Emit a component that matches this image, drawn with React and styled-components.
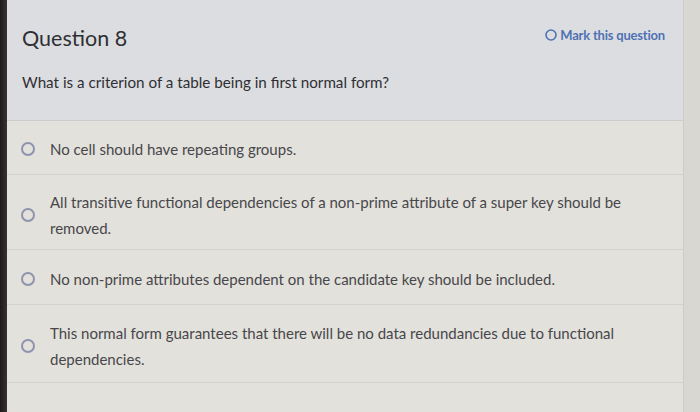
import React from 'react'
import styled, { createGlobalStyle } from 'styled-components'

const GlobalStyle = createGlobalStyle`
  html, body {
    margin: 0;
    padding: 0;
    background: #d7d5cf;
  }
  body {
    font-family: Lato, "Open Sans", sans-serif;
  }
`

const Screen = styled.div`
  display: flex;
  width: 700px;
  height: 412px;
  overflow: hidden;
  background: #d9d7d1;
`

const Bezel = styled.div`
  width: 7px;
  flex-shrink: 0;
  background: linear-gradient(90deg, #1d1a1b, #3a3232);
`

const Panel = styled.div`
  width: 676px;
  display: flex;
  flex-direction: column;
  background: #e3e1db;
  border-right: 1px solid #cfcdc8;
`

const Header = styled.div`
  height: 121px;
  padding: 25px 18px 0 15px;
  box-sizing: border-box;
  background: #dcdde1;
  border-bottom: 1px solid #cdcdcd;
`

const TitleRow = styled.div`
  display: flex;
  justify-content: space-between;
  align-items: flex-start;
`

const Title = styled.h2`
  margin: 0;
  font-size: 21.5px;
  font-weight: 400;
  color: #2f2f33;
`

const MarkLink = styled.a`
  display: flex;
  align-items: center;
  gap: 3px;
  margin-top: 2px;
  font-size: 13px;
  font-weight: 700;
  letter-spacing: -0.2px;
  color: #4f72b3;
  cursor: pointer;
`

const Prompt = styled.p`
  margin: 22px 0 0;
  font-size: 15.2px;
  color: #2f2f33;
`

const Options = styled.div`
  display: flex;
  flex-direction: column;
`

const Option = styled.label`
  display: flex;
  align-items: center;
  gap: 15px;
  height: ${p => p.$h}px;
  padding: ${p => (p.$two ? 5 : 3)}px 0 0 14px;
  box-sizing: border-box;
  border-bottom: 1px solid #d3d1cb;
  cursor: pointer;
`

const Radio = styled.span`
  width: 10px;
  height: 10px;
  flex-shrink: 0;
  border: 2px solid #8f93ad;
  border-radius: 50%;
`

const OptionText = styled.span`
  font-size: 15px;
  line-height: 26px;
  color: #47474b;
  max-width: 578px;
`

const Circle = () => (
  <svg width="12" height="12" viewBox="0 0 12 12">
    <circle cx="6" cy="6" r="5" fill="none" stroke="#4f72b3" strokeWidth="1.6" />
  </svg>
)

const answers = [
  { text: 'No cell should have repeating groups.', h: 54 },
  {
    text: 'All transitive functional dependencies of a non-prime attribute of a super key should be removed.',
    h: 75,
    two: true,
  },
  { text: 'No non-prime attributes dependent on the candidate key should be included.', h: 55 },
  {
    text: 'This normal form guarantees that there will be no data redundancies due to functional dependencies.',
    h: 78,
    two: true,
  },
]

export default function App() {
  return (
    <>
      <GlobalStyle />
      <Screen>
        <Bezel />
        <Panel>
          <Header>
            <TitleRow>
              <Title>Question 8</Title>
              <MarkLink>
                <Circle />
                Mark this question
              </MarkLink>
            </TitleRow>
            <Prompt>What is a criterion of a table being in first normal form?</Prompt>
          </Header>
          <Options>
            {answers.map((a, i) => (
              <Option key={i} $h={a.h} $two={a.two}>
                <Radio />
                <OptionText>{a.text}</OptionText>
              </Option>
            ))}
          </Options>
        </Panel>
      </Screen>
    </>
  )
}
